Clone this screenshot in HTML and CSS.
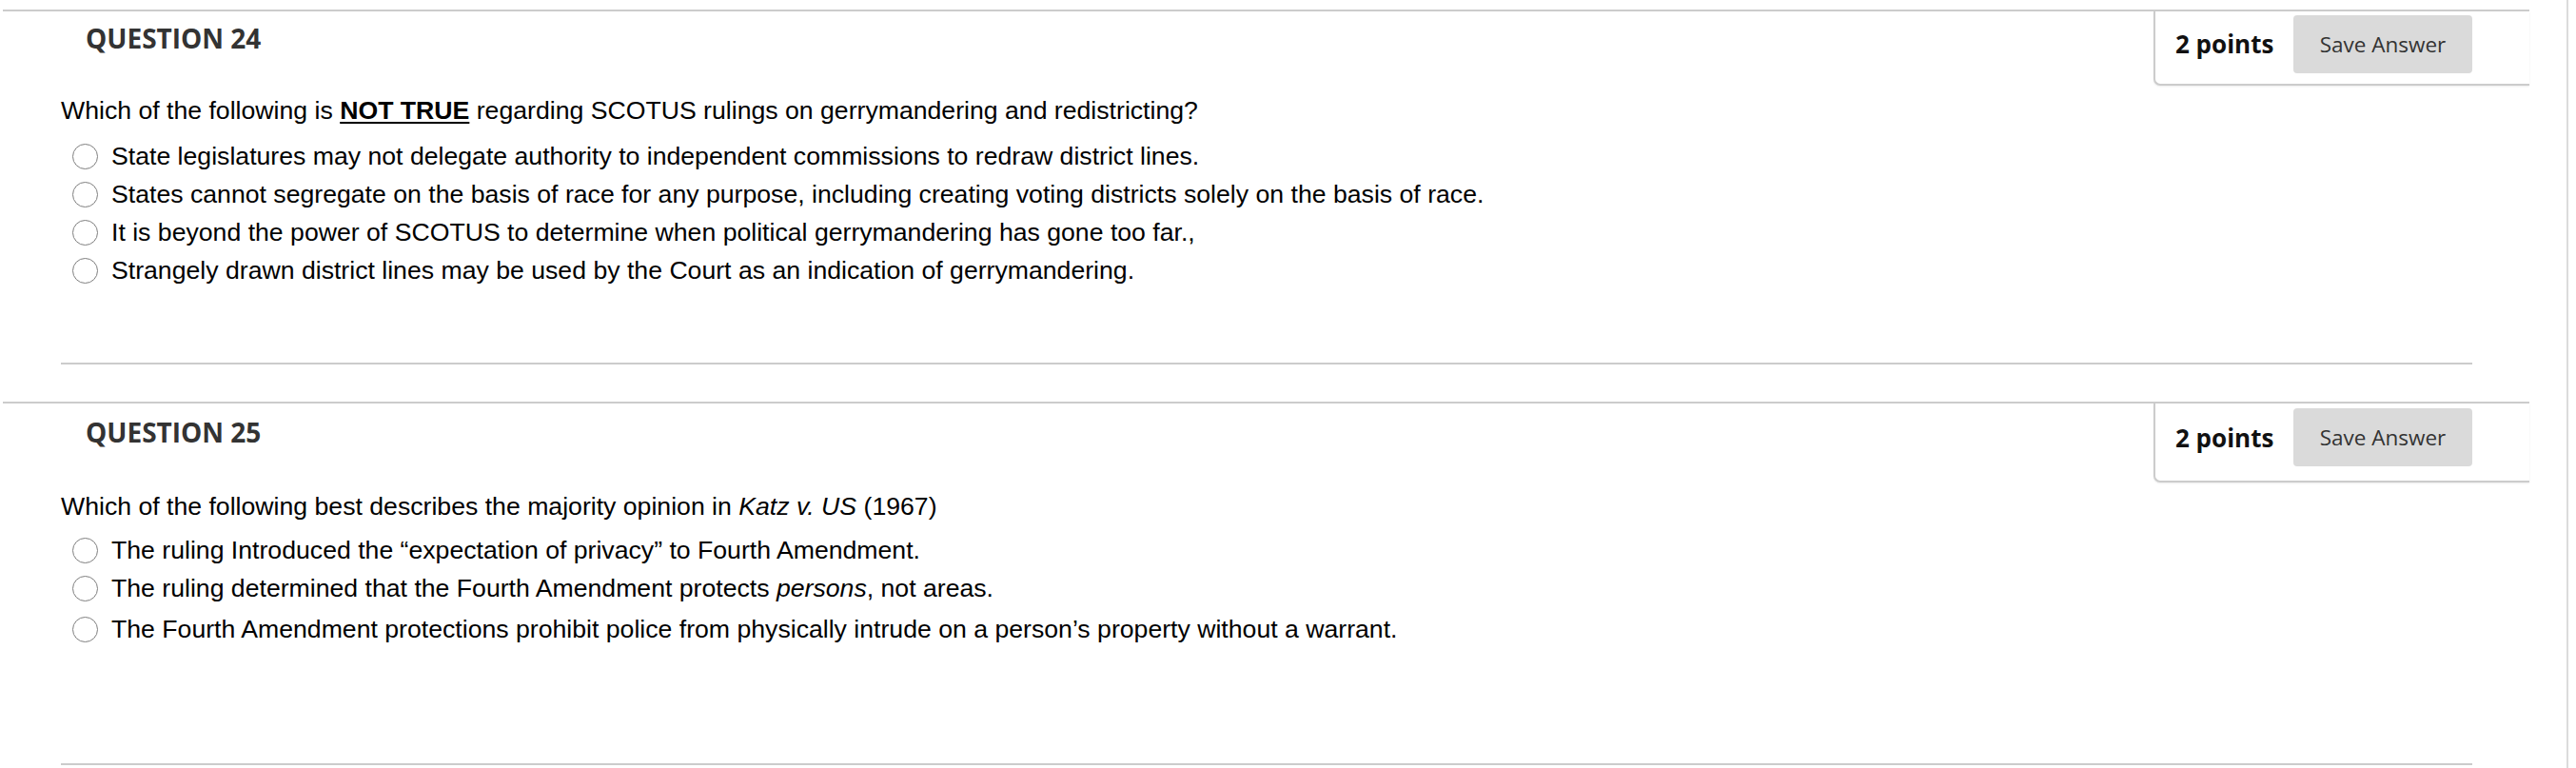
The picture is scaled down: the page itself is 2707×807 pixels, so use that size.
FILE: index.html
```html
<!DOCTYPE html>
<html lang="en">
<head>
<meta charset="utf-8">
<title>Questions</title>
<link rel="stylesheet" href="styles.css">
</head>
<body>
<div class="page">
  <main class="main">
    <section class="question">
      <div class="q-head">
        <h2 class="q-title">QUESTION 24</h2>
        <div class="points-box">
          <span class="points">2 points</span>
          <button class="save-btn" type="button">Save Answer</button>
        </div>
      </div>
      <div class="q-body">
        <p class="prompt">Which of the following is <strong class="emph">NOT TRUE</strong> regarding SCOTUS rulings on gerrymandering and redistricting?</p>
        <ul class="options options-24">
          <li class="option"><span class="radio"></span><span class="opt-text">State legislatures may not delegate authority to independent commissions to redraw district lines.</span></li>
          <li class="option"><span class="radio"></span><span class="opt-text">States cannot segregate on the basis of race for any purpose, including creating voting districts solely on the basis of race.</span></li>
          <li class="option"><span class="radio"></span><span class="opt-text">It is beyond the power of SCOTUS to determine when political gerrymandering has gone too far.,</span></li>
          <li class="option"><span class="radio"></span><span class="opt-text">Strangely drawn district lines may be used by the Court as an indication of gerrymandering.</span></li>
        </ul>
        <hr class="divider">
      </div>
    </section>

    <section class="question question-next">
      <div class="q-head">
        <h2 class="q-title">QUESTION 25</h2>
        <div class="points-box">
          <span class="points">2 points</span>
          <button class="save-btn" type="button">Save Answer</button>
        </div>
      </div>
      <div class="q-body">
        <p class="prompt">Which of the following best describes the majority opinion in <em>Katz v. US</em> (1967)</p>
        <ul class="options options-25">
          <li class="option"><span class="radio"></span><span class="opt-text">The ruling Introduced the “expectation of privacy” to Fourth Amendment.</span></li>
          <li class="option"><span class="radio"></span><span class="opt-text">The ruling determined that the Fourth Amendment protects <em>persons</em>, not areas.</span></li>
          <li class="option option-spaced"><span class="radio"></span><span class="opt-text">The Fourth Amendment protections prohibit police from physically intrude on a person’s property without a warrant.</span></li>
        </ul>
        <hr class="divider">
      </div>
    </section>
  </main>
  <div class="rail"></div>
</div>
</body>
</html>
```

FILE: styles.css
```css
* {
  box-sizing: border-box;
}

html, body {
  margin: 0;
  padding: 0;
  background: #ffffff;
}

body {
  width: 2707px;
  height: 807px;
  overflow: hidden;
  font-family: "Liberation Sans", Arial, sans-serif;
  color: #000;
}

.page {
  display: flex;
  height: 807px;
}

.main {
  width: 2655px;
  margin-left: 3px;
  padding-top: 10px;
}

.rail {
  margin-left: 39px;
  width: 2px;
  height: 807px;
  background: #dcdcdc;
}

.question {
  border-top: 2px solid #cccccc;
}

.question-next {
  margin-top: 39px;
}

.q-head {
  display: flex;
  justify-content: space-between;
  align-items: flex-start;
}

.q-title {
  margin: 0;
  padding: 10px 0 0 87px;
  font-family: "Open Sans", "Liberation Sans", sans-serif;
  font-weight: 700;
  font-size: 28px;
  line-height: 36px;
  color: #333333;
}

.question-next .q-title {
  padding-top: 12px;
}

.points-box {
  width: 395px;
  height: 78px;
  display: flex;
  align-items: center;
  padding: 0 60px 8px 21px;
  border-left: 2px solid #cccccc;
  border-bottom: 2px solid #cccccc;
  border-bottom-left-radius: 7px;
  background: #ffffff;
  box-shadow: 0 1px 2px rgba(0, 0, 0, 0.08);
}

.question-next .points-box {
  height: 83px;
  padding-bottom: 10px;
}

.points {
  font-family: "Open Sans", "Liberation Sans", sans-serif;
  font-weight: 700;
  font-size: 26px;
  color: #111111;
  white-space: nowrap;
}

.save-btn {
  margin-left: auto;
  width: 188px;
  height: 61px;
  border: none;
  border-radius: 4px;
  background: #dadada;
  font-family: "Open Sans", "Liberation Sans", sans-serif;
  font-size: 22.5px;
  color: #333333;
  padding: 0;
}

.q-body {
  padding: 11px 0 0 61px;
}

.question-next .q-body {
  padding-top: 10px;
}

.prompt {
  margin: 0;
  font-size: 26.65px;
  line-height: 30px;
}

.emph {
  font-weight: 700;
  text-decoration: underline;
  text-decoration-thickness: 2px;
  text-underline-offset: 3px;
}

.options {
  list-style: none;
  margin: 13px 0 0 0;
  padding: 0;
}

.options-24 {
  padding-bottom: 77px;
}

.options-25 {
  margin-top: 11px;
  padding-bottom: 121px;
}

.option {
  display: flex;
  align-items: center;
  height: 40px;
  padding-left: 12px;
  font-size: 26.65px;
}

.option-spaced {
  margin-top: 3px;
}

.radio {
  flex: none;
  width: 27px;
  height: 27px;
  border: 1.5px solid #7e7e7e;
  border-radius: 50%;
  background: #ffffff;
  margin-right: 14px;
}

.opt-text {
  white-space: nowrap;
}

.divider {
  margin: 0;
  width: 2534px;
  height: 2px;
  border: none;
  background: #cccccc;
}
```
